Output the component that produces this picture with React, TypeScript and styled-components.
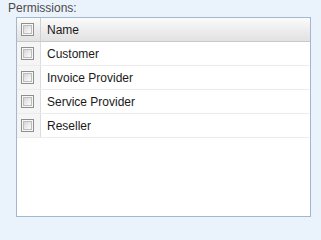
import React from "react";
import styled, { createGlobalStyle } from "styled-components";

const Global = createGlobalStyle`
  html, body { margin: 0; padding: 0; }
  body {
    background: #eaf2fb;
    font-family: "Liberation Sans", Arial, sans-serif;
    font-size: 12px;
    color: #1e1e1e;
    width: 321px;
    height: 221px;
    overflow: hidden;
  }
`;

const Page = styled.div`
  display: flex;
  flex-direction: column;
  padding: 2px 11px 0 16px;
  height: 221px;
  box-sizing: border-box;
`;

const Label = styled.div`
  color: #4a4a4a;
  font-size: 12px;
  line-height: 13px;
  margin-left: -8px;
  height: 15px;
`;

const Grid = styled.div`
  width: 295px;
  height: 200px;
  box-sizing: border-box;
  border: 1px solid #a3b8cf;
  background: #ffffff;
  display: flex;
  flex-direction: column;
`;

const Row = styled.div<{ $header?: boolean }>`
  display: flex;
  height: 24px;
  box-sizing: border-box;
  border-bottom: 1px solid ${(p) => (p.$header ? "#c9c9c9" : "#ececec")};
  background: ${(p) =>
    p.$header ? "linear-gradient(#fbfbfb, #ebebeb 60%, #e2e2e2)" : "#ffffff"};
`;

const CheckCell = styled.div<{ $header?: boolean }>`
  width: 24px;
  flex: none;
  box-sizing: border-box;
  border-right: 1px solid ${(p) => (p.$header ? "#d0d0d0" : "#dcdcdc")};
  background: ${(p) => (p.$header ? "transparent" : "#f5f5f5")};
  display: flex;
  align-items: center;
  padding-left: 4px;
`;

const Box = styled.span`
  width: 13px;
  height: 13px;
  box-sizing: border-box;
  border: 1px solid #8e8f8f;
  background: #f8f8f8;
  display: flex;
  align-items: center;
  justify-content: center;
  &::after {
    content: "";
    width: 9px;
    height: 9px;
    box-sizing: border-box;
    border: 1px solid #bcbcbc;
    background: linear-gradient(135deg, #d4d4d4, #eeeeee 60%, #fafafa);
  }
`;

const TextCell = styled.div`
  flex: 1;
  display: flex;
  align-items: center;
  padding-left: 6px;
  color: #1a1a1a;
  white-space: nowrap;
`;

const items = ["Customer", "Invoice Provider", "Service Provider", "Reseller"];

export default function App() {
  return (
    <>
      <Global />
      <Page>
        <Label>Permissions:</Label>
        <Grid>
          <Row $header>
            <CheckCell $header>
              <Box />
            </CheckCell>
            <TextCell>Name</TextCell>
          </Row>
          {items.map((t) => (
            <Row key={t}>
              <CheckCell>
                <Box />
              </CheckCell>
              <TextCell>{t}</TextCell>
            </Row>
          ))}
        </Grid>
      </Page>
    </>
  );
}
